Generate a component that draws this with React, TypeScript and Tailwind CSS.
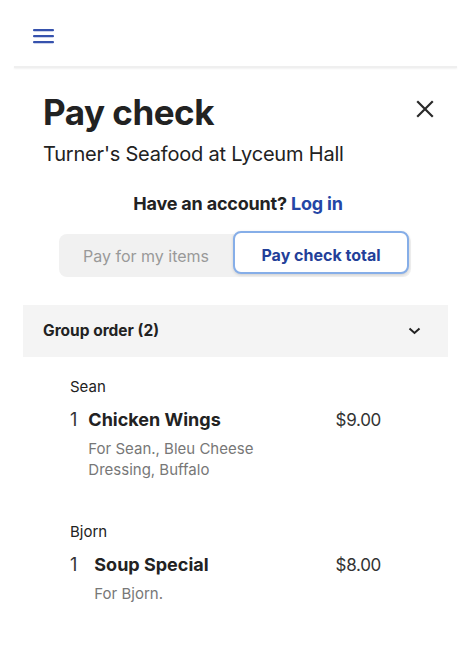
import React from 'react';

const items = [
  {
    person: 'Sean',
    qty: 1,
    name: 'Chicken Wings',
    price: '$9.00',
    note: ['For Sean., Bleu Cheese', 'Dressing, Buffalo'],
    gap: 'gap-[11px]',
  },
  {
    person: 'Bjorn',
    qty: 1,
    name: 'Soup Special',
    price: '$8.00',
    note: ['For Bjorn.'],
    gap: 'gap-[17px]',
  },
];

const App: React.FC = () => {
  return (
    <div className="min-h-screen bg-white text-[#222] font-['Inter',sans-serif]">
      {/* Top bar */}
      <header className="h-[66px] px-[33px] flex items-center">
        <svg width="22" height="16" viewBox="0 0 22 16" className="mt-[6px]">
          <rect x="0" y="1" width="21" height="2.2" rx="1" fill="#3652ad" />
          <rect x="0" y="7" width="21" height="2.2" rx="1" fill="#3652ad" />
          <rect x="0" y="13" width="21" height="2.2" rx="1" fill="#3652ad" />
        </svg>
      </header>
      <div className="ml-[14px] mr-[19px] h-[2px] bg-[#efefef] shadow-[0_1px_2px_rgba(0,0,0,0.06)]" />

      {/* Title */}
      <div className="px-[43px] pt-[22px] flex justify-between items-start">
        <h1 className="text-[35px] leading-[44px] font-bold tracking-[-0.5px]">Pay check</h1>
        <button className="mt-[10px] mr-[-1px]">
          <svg width="18" height="18" viewBox="0 0 18 18">
            <path d="M2 2 L16 16 M16 2 L2 16" stroke="#2a2a2a" strokeWidth="2.2" strokeLinecap="square" />
          </svg>
        </button>
      </div>
      <p className="px-[43px] mt-[7px] text-[20px] leading-[26px] tracking-[-0.2px]">Turner's Seafood at Lyceum Hall</p>

      <p className="mt-[25px] text-center text-[18px] leading-[24px] font-bold tracking-[-0.2px]">
        Have an account? <span className="text-[#2446a6]">Log in</span>
      </p>

      {/* Toggle */}
      <div className="mt-[18px] ml-[59px] w-[352px] h-[43px] bg-[#f1f1f1] rounded-[8px] flex relative">
        <div className="w-[174px] flex items-center justify-center text-[16px] text-[#999] mt-[1px]">Pay for my items</div>
        <div className="absolute left-[174px] top-[-3px] w-[176px] h-[43px] bg-white border-2 border-[#86aee8] rounded-[8px] shadow-[0_1px_3px_rgba(0,0,0,0.15)] flex items-center justify-center text-[16px] font-bold text-[#233f99]">
          <span className="mt-[4px]">Pay check total</span>
        </div>
      </div>

      {/* Group order */}
      <div className="mt-[28px] ml-[23px] mr-[28px] h-[52px] bg-[#f4f4f4] flex items-center justify-between pl-[20px] pr-[27px]">
        <span className="text-[15.5px] font-bold">Group order (2)</span>
        <svg width="13" height="8" viewBox="0 0 13 8">
          <path d="M1.5 1.5 L6.5 6 L11.5 1.5" stroke="#222" strokeWidth="2" fill="none" />
        </svg>
      </div>

      <div className="pl-[70px] pr-[95px] pt-[20px] flex flex-col gap-[42px]">
        {items.map((it) => (
          <div key={it.person}>
            <p className="text-[15px] leading-[20px]">{it.person}</p>
            <div className="mt-[11px] flex items-start justify-between">
              <div className={`flex ${it.gap}`}>
                <span className="text-[18px] leading-[24px] text-[#333]">{it.qty}</span>
                <div>
                  <p className="text-[18px] leading-[24px] font-bold tracking-[0px]">{it.name}</p>
                  <div className="mt-[6px] text-[15px] leading-[21px] text-[#777]">
                    {it.note.map((n) => (
                      <p key={n}>{n}</p>
                    ))}
                  </div>
                </div>
              </div>
              <span className="text-[17px] leading-[24px] tracking-[-0.3px] text-[#333]">{it.price}</span>
            </div>
          </div>
        ))}
      </div>
    </div>
  );
};

export default App;
